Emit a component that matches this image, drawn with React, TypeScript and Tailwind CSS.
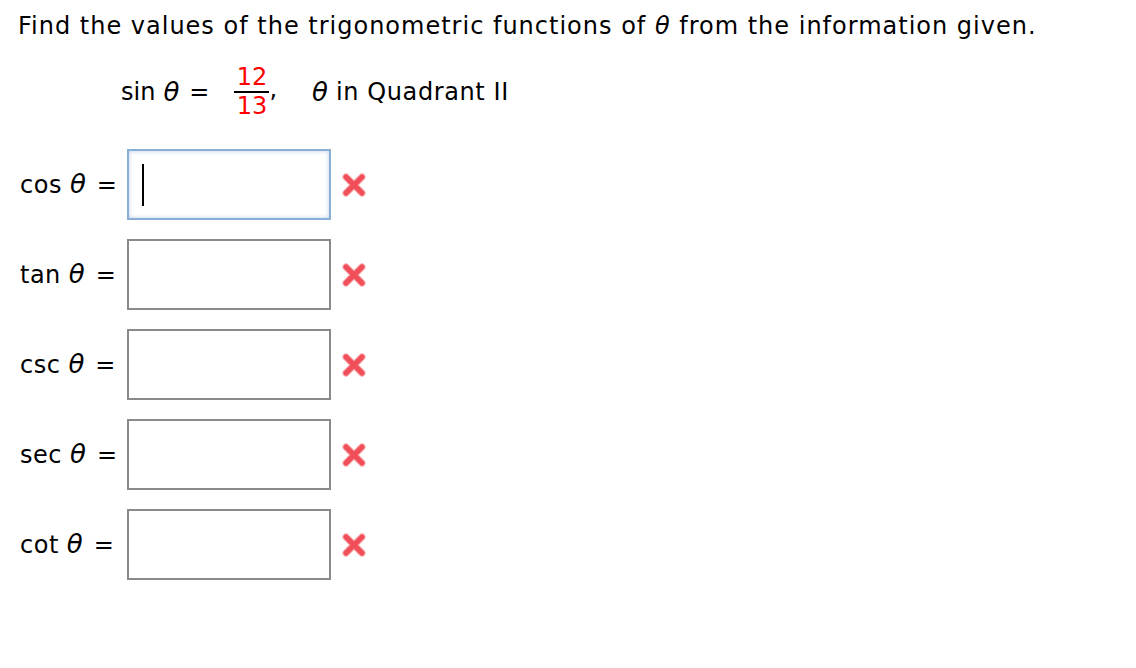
import React from "react";

const sans = { fontFamily: '"DejaVu Sans", Verdana, sans-serif' };

function Theta({ className = "" }: { className?: string }) {
  return <span className={"italic text-[26px] " + className}>θ</span>;
}

function WrongMark() {
  return (
    <svg viewBox="0 0 28 28" className="w-[28px] h-[28px]">
      <g stroke="#f7a0a4" strokeWidth="7" strokeLinecap="round">
        <line x1="6" y1="6" x2="22" y2="22" />
        <line x1="22" y1="6" x2="6" y2="22" />
      </g>
      <g stroke="#f04e58" strokeWidth="5" strokeLinecap="round">
        <line x1="6" y1="6" x2="22" y2="22" />
        <line x1="22" y1="6" x2="6" y2="22" />
      </g>
    </svg>
  );
}

const rows = ["cos", "tan", "csc", "sec", "cot"];

export default function App() {
  return (
    <div className="w-[1136px] h-[668px] bg-white text-black" style={sans}>
      <div className="pl-[18px] pt-[11px] text-[24px] leading-[30px] tracking-[1px] whitespace-nowrap">
        Find the values of the trigonometric functions of{" "}
        <span className="italic">θ</span> from the information given.
      </div>

      {/* given */}
      <div className="flex items-center pl-[121px] mt-[21px] h-[60px] text-[24px]">
        <span>sin</span>
        <Theta className="ml-[8px]" />
        <span className="ml-[10px]">=</span>
        <span className="inline-flex flex-col items-center ml-[25px] text-[#ff0000] leading-[27px]">
          <span>12</span>
          <span className="w-[35px] h-[2px] bg-black" />
          <span>13</span>
        </span>
        <span className="relative top-[-3px]">,</span>
        <Theta className="ml-[35px]" />
        <span className="ml-[8px] tracking-[0.6px]">in Quadrant II</span>
      </div>

      {/* answer rows */}
      <div className="flex flex-col gap-[19px] mt-[27px]">
        {rows.map((fn, i) => (
          <div key={fn} className="flex items-center h-[71px]">
            <div className="w-[127px] pl-[20px] text-[24px] whitespace-nowrap flex items-center">
              <span className="tracking-[0.5px]">{fn}</span>
              <Theta className="ml-[8px]" />
              <span className="ml-[11px]">=</span>
            </div>
            <div
              className={
                i === 0
                  ? "w-[204px] h-[71px] border-2 border-[#8aafd6] shadow-[inset_0_0_4px_rgba(120,160,210,0.5)] flex items-center pl-[13px]"
                  : "w-[204px] h-[71px] border-2 border-[#8a8a8a]"
              }
            >
              {i === 0 && <span className="w-[2px] h-[42px] bg-black" />}
            </div>
            <div className="ml-[9px]">
              <WrongMark />
            </div>
          </div>
        ))}
      </div>
    </div>
  );
}
